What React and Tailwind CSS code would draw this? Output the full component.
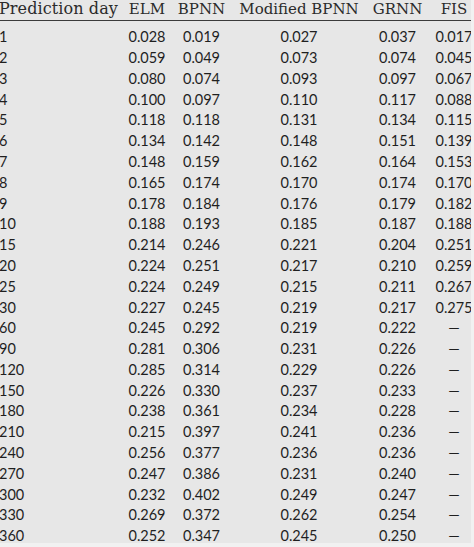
import React from 'react';

const rows = [
  ['1', '0.028', '0.019', '0.027', '0.037', '0.017'],
  ['2', '0.059', '0.049', '0.073', '0.074', '0.045'],
  ['3', '0.080', '0.074', '0.093', '0.097', '0.067'],
  ['4', '0.100', '0.097', '0.110', '0.117', '0.088'],
  ['5', '0.118', '0.118', '0.131', '0.134', '0.115'],
  ['6', '0.134', '0.142', '0.148', '0.151', '0.139'],
  ['7', '0.148', '0.159', '0.162', '0.164', '0.153'],
  ['8', '0.165', '0.174', '0.170', '0.174', '0.170'],
  ['9', '0.178', '0.184', '0.176', '0.179', '0.182'],
  ['10', '0.188', '0.193', '0.185', '0.187', '0.188'],
  ['15', '0.214', '0.246', '0.221', '0.204', '0.251'],
  ['20', '0.224', '0.251', '0.217', '0.210', '0.259'],
  ['25', '0.224', '0.249', '0.215', '0.211', '0.267'],
  ['30', '0.227', '0.245', '0.219', '0.217', '0.275'],
  ['60', '0.245', '0.292', '0.219', '0.222', '—'],
  ['90', '0.281', '0.306', '0.231', '0.226', '—'],
  ['120', '0.285', '0.314', '0.229', '0.226', '—'],
  ['150', '0.226', '0.330', '0.237', '0.233', '—'],
  ['180', '0.238', '0.361', '0.234', '0.228', '—'],
  ['210', '0.215', '0.397', '0.241', '0.236', '—'],
  ['240', '0.256', '0.377', '0.236', '0.236', '—'],
  ['270', '0.247', '0.386', '0.231', '0.240', '—'],
  ['300', '0.232', '0.402', '0.249', '0.247', '—'],
  ['330', '0.269', '0.372', '0.262', '0.254', '—'],
  ['360', '0.252', '0.347', '0.245', '0.250', '—'],
];

const headers = ['Prediction day', 'ELM', 'BPNN', 'Modified BPNN', 'GRNN', 'FIS'];

const cols = 'grid grid-cols-[122px_52px_57px_138px_59px_54px]';

export default function App() {
  return (
    <div className="w-[474px] h-[547px] overflow-hidden bg-[#f1f1f1]">
      <div className="w-[471px] h-[543px] overflow-hidden bg-[#e7e7e7]">
        <div className="w-[482px] -ml-px">
          <div className={`${cols} h-[21px] items-center pb-[2px] border-b-[1.5px] border-[#3b3b3b] text-[#2b2b2b] font-['DejaVu_Serif',serif] text-[15px] leading-none`}>
            {headers.map((h, i) => (
              <div
                key={h}
                className={i === 0 ? 'text-left whitespace-nowrap text-[16px] tracking-[0.1px]' : 'text-center whitespace-nowrap'}
              >
                {h}
              </div>
            ))}
          </div>
          <div className="pt-[6px] text-[#1f1f1f] font-['Lato',sans-serif] text-[14.5px] leading-none">
            {rows.map((r) => (
              <div key={r[0]} className={`${cols} h-[20.8px] items-center`}>
                {r.map((v, i) => (
                  <div key={i} className={i === 0 ? 'text-left' : 'text-center'}>
                    {v}
                  </div>
                ))}
              </div>
            ))}
          </div>
        </div>
      </div>
    </div>
  );
}
